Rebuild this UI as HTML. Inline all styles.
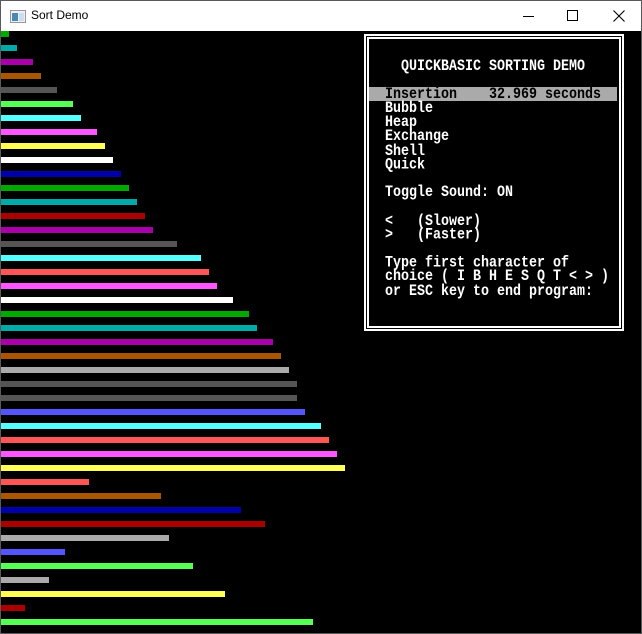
<!DOCTYPE html>
<html><head><meta charset="utf-8"><style>
*{margin:0;padding:0;box-sizing:border-box}
body{width:642px;height:634px;overflow:hidden;background:#000;position:relative;font-family:"Liberation Sans",sans-serif}
#tb{position:absolute;left:0;top:0;width:642px;height:31px;background:#fff;border:1px solid #5a5a5a;border-bottom:none}
#tb .t{position:absolute;left:30px;top:7px;font-size:12px;color:#000}
#frame{position:absolute;left:0;top:31px;width:642px;height:603px;border-left:1px solid #5a5a5a;border-right:1px solid #5a5a5a;border-bottom:1px solid #5a5a5a}
.b{position:absolute;left:1px;height:6px}
.box{position:absolute;border:2px solid #fff}
.tx{position:absolute;font-family:"Liberation Mono",monospace;font-weight:bold;font-size:13.33px;line-height:12.2px;color:#fff;white-space:pre;transform:scaleY(1.15);transform-origin:0 0}
</style></head><body>
<div id="tb">
<svg style="position:absolute;left:9px;top:9px" width="16" height="13"><rect x="0.5" y="0.5" width="15" height="12" fill="#eef" stroke="#999"/><rect x="2" y="3" width="6" height="8" fill="#4a8ab0"/><rect x="9" y="3" width="5" height="8" fill="#cde"/></svg>
<div class="t">Sort Demo</div>
<div style="position:absolute;left:522px;top:15px;width:11px;height:1px;background:#000"></div>
<div style="position:absolute;left:566px;top:9px;width:11px;height:11px;border:1px solid #000"></div>
<svg style="position:absolute;left:612px;top:9px" width="12" height="12"><path d="M0.5 0.5L11.5 11.5M11.5 0.5L0.5 11.5" stroke="#000" stroke-width="1.1"/></svg>
</div>
<div id="frame"></div>
<div id="bars"></div>
<div class="box" style="left:364px;top:34px;width:260px;height:297px"></div>
<div class="box" style="left:367px;top:37px;width:254px;height:291px"></div>
<div style="position:absolute;left:369px;top:87px;width:248px;height:14px;background:#aaa"></div>
<div class="tx" style="left:401px;top:61px">QUICKBASIC SORTING DEMO</div>
<div class="tx" style="left:385px;top:89px;color:#000">Insertion    32.969 seconds</div>
<div class="tx" style="left:385px;top:103px">Bubble
Heap
Exchange
Shell
Quick

Toggle Sound: ON

&lt;   (Slower)
&gt;   (Faster)

Type first character of
choice ( I B H E S Q T &lt; &gt; )
or ESC key to end program:</div>
<script>
var C={g:"#00aa00",c:"#00aaaa",m:"#aa00aa",br:"#aa5500",dg:"#555555",lg:"#55ff55",lc:"#55ffff",lm:"#ff55ff",y:"#ffff55",w:"#ffffff",bl:"#0000aa",r:"#aa0000",lr:"#ff5555",gr:"#aaaaaa",lb:"#5555ff"};
var d=[[8,"g"],[16,"c"],[32,"m"],[40,"br"],[56,"dg"],[72,"lg"],[80,"lc"],[96,"lm"],[104,"y"],[112,"w"],[120,"bl"],[128,"g"],[136,"c"],[144,"r"],[152,"m"],[176,"dg"],[200,"lc"],[208,"lr"],[216,"lm"],[232,"w"],[248,"g"],[256,"c"],[272,"m"],[280,"br"],[288,"gr"],[296,"dg"],[296,"dg"],[304,"lb"],[320,"lc"],[328,"lr"],[336,"lm"],[344,"y"],[88,"lr"],[160,"br"],[240,"bl"],[264,"r"],[168,"gr"],[64,"lb"],[192,"lg"],[48,"gr"],[224,"y"],[24,"r"],[312,"lg"]];
var h="";d.forEach(function(e,i){h+='<div class="b" style="top:'+(31+14*i)+'px;width:'+e[0]+'px;background:'+C[e[1]]+'"></div>';});
document.getElementById("bars").innerHTML=h;
</script>
</body></html>
